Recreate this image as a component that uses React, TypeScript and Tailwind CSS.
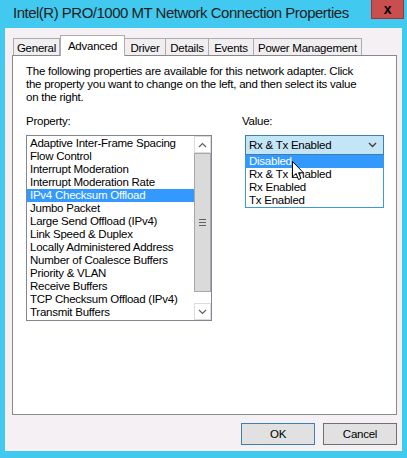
import React from 'react';

const properties = [
  'Adaptive Inter-Frame Spacing',
  'Flow Control',
  'Interrupt Moderation',
  'Interrupt Moderation Rate',
  'IPv4 Checksum Offload',
  'Jumbo Packet',
  'Large Send Offload (IPv4)',
  'Link Speed & Duplex',
  'Locally Administered Address',
  'Number of Coalesce Buffers',
  'Priority & VLAN',
  'Receive Buffers',
  'TCP Checksum Offload (IPv4)',
  'Transmit Buffers',
];

const tabs = [
  { label: 'General', w: 'w-[47px]' },
  { label: 'Advanced', w: 'w-[65px]', active: true },
  { label: 'Driver', w: 'w-[41px]' },
  { label: 'Details', w: 'w-[43px]' },
  { label: 'Events', w: 'w-[45px]' },
  { label: 'Power Management', w: 'w-[108px]' },
];

const values = ['Disabled', 'Rx & Tx Enabled', 'Rx Enabled', 'Tx Enabled'];

const App: React.FC = () => {
  return (
    <div className="w-[407px] h-[458px] bg-[#41c9ef] flex flex-col font-['Liberation_Sans',Arial,sans-serif] text-[11.5px] tracking-[-0.25px] text-black overflow-hidden">
      {/* Title bar */}
      <div className="h-[28px] flex items-start justify-between shrink-0">
        <div className="pl-[13px] pt-[4px] text-[15px] tracking-[-0.5px] leading-[18px] text-[#1e1e1e] whitespace-nowrap">
          Intel(R) PRO/1000 MT Network Connection Properties
        </div>
        <div className="mr-[3px] w-[33px] h-[19px] shrink-0 bg-[#c94f4f] border border-t-0 border-[#9b3434] flex items-center justify-center">
          <span className="text-[14px] font-bold leading-none text-black">x</span>
        </div>
      </div>

      {/* Client area */}
      <div className="flex-1 ml-[5px] mr-[5px] mb-[7px] bg-[#f5f0f3] flex flex-col">
        {/* Tabs */}
        <div className="flex items-end ml-[8px] mt-[7px] h-[20px] relative z-10">
          {tabs.map((t) =>
            t.active ? (
              <div
                key={t.label}
                className={`${t.w} h-[21px] -mb-px bg-white border border-b-0 border-[#adadad] flex items-start justify-center pt-[3px] leading-[14px] whitespace-nowrap`}
              >
                {t.label}
              </div>
            ) : (
              <div
                key={t.label}
                className={`${t.w} h-[17px] bg-[#f0eef0] border border-b-0 border-l-0 first:border-l border-[#adadad] flex items-start justify-center pt-[2px] leading-[14px] whitespace-nowrap`}
              >
                {t.label}
              </div>
            )
          )}
        </div>

        {/* Tab panel */}
        <div className="ml-[7px] mr-[5px] h-[360px] bg-white border border-[#898989] pl-[13px] pt-[9px] flex flex-col">
          <p className="leading-[13px] whitespace-nowrap">
            The following properties are available for this network adapter. Click
            <br />
            the property you want to change on the left, and then select its value
            <br />
            on the right.
          </p>

          <div className="flex mt-[11px]">
            {/* Property column */}
            <div className="flex flex-col">
              <div className="leading-[13px]">Property:</div>
              <div className="mt-[7px] w-[186px] h-[186px] border border-[#828790] flex">
                <div className="flex-1 pt-[1px] flex flex-col">
                  {properties.map((p, i) => (
                    <div
                      key={p}
                      className={`h-[13px] leading-[13px] pl-[3px] whitespace-nowrap ${
                        i === 4 ? 'bg-[#3399ff] text-white' : ''
                      }`}
                    >
                      {p}
                    </div>
                  ))}
                </div>
                {/* Scrollbar */}
                <div className="w-[17px] flex flex-col bg-white">
                  <div className="h-[17px] border border-[#dcdcdc] flex items-center justify-center">
                    <svg width="9" height="6" viewBox="0 0 9 6">
                      <path d="M1 5 L4.5 1.5 L8 5" fill="none" stroke="#606060" strokeWidth="1.2" />
                    </svg>
                  </div>
                  <div className="h-[139px] bg-[#dadada] border border-[#a8a8a8] flex items-center justify-center">
                    <div className="flex flex-col gap-[2px]">
                      <div className="w-[7px] h-px bg-[#606060]" />
                      <div className="w-[7px] h-px bg-[#606060]" />
                      <div className="w-[7px] h-px bg-[#606060]" />
                    </div>
                  </div>
                  <div className="flex-1" />
                  <div className="h-[17px] border border-[#dcdcdc] flex items-center justify-center">
                    <svg width="9" height="6" viewBox="0 0 9 6">
                      <path d="M1 1 L4.5 4.5 L8 1" fill="none" stroke="#606060" strokeWidth="1.2" />
                    </svg>
                  </div>
                </div>
              </div>
            </div>

            {/* Value column */}
            <div className="flex flex-col ml-[30px]">
              <div className="leading-[13px]">Value:</div>
              <div className="relative mt-[7px] ml-[3px] w-[139px]">
                <div className="h-[20px] bg-[#c4e5f6] border border-[#3c7fb1] flex items-center justify-between pl-[3px] pr-[6px]">
                  <span className="leading-[13px]">Rx &amp; Tx Enabled</span>
                  <svg width="9" height="6" viewBox="0 0 9 6">
                    <path d="M1 1 L4.5 4.5 L8 1" fill="none" stroke="#404040" strokeWidth="1.4" />
                  </svg>
                </div>
                <div className="border border-[#3d9ad8] border-t-0 bg-white flex flex-col">
                  {values.map((v, i) => (
                    <div
                      key={v}
                      className={`h-[13px] leading-[13px] pl-[3px] ${
                        i === 0 ? 'bg-[#3399ff] text-white' : ''
                      }`}
                    >
                      {v}
                    </div>
                  ))}
                </div>
                {/* Mouse pointer */}
                <svg
                  className="absolute left-[47px] top-[26px]"
                  width="13"
                  height="20"
                  viewBox="0 0 13 20"
                >
                  <path
                    d="M0.5 0.5 L0.5 16 L4 12.5 L6.5 18.5 L9 17.5 L6.5 11.8 L11.5 11.8 Z"
                    fill="white"
                    stroke="black"
                    strokeWidth="1"
                  />
                </svg>
              </div>
            </div>
          </div>
        </div>

        {/* Buttons */}
        <div className="flex justify-end gap-[8px] mr-[5px] mt-[8px]">
          <button className="w-[74px] h-[22px] bg-[#e1e1e1] border border-[#3c7fb1] leading-[13px]">
            OK
          </button>
          <button className="w-[74px] h-[22px] bg-[#e1e1e1] border border-[#707070] leading-[13px]">
            Cancel
          </button>
        </div>
      </div>
    </div>
  );
};

export default App;
